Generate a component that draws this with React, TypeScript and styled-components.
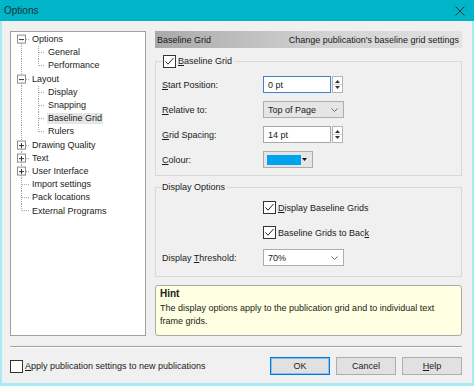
import styled, { createGlobalStyle } from 'styled-components'

const GlobalStyle = createGlobalStyle`
  html, body {
    margin: 0;
    padding: 0;
  }
  body {
    font-family: 'Liberation Sans', Arial, sans-serif;
    font-size: 9px;
    color: #1a1a1a;
    background: #f0f0f0;
  }
  * {
    box-sizing: border-box;
  }
`

const Window = styled.div`
  width: 474px;
  height: 386px;
  display: flex;
  flex-direction: column;
  overflow: hidden;
`

const TitleBar = styled.header`
  height: 21px;
  flex-shrink: 0;
  display: flex;
  align-items: center;
  justify-content: space-between;
  padding: 0 9px 0 4px;
  background: #00b5c8;
  color: #15333a;
  font-size: 10px;
`

const Body = styled.div`
  flex: 1;
  display: flex;
  flex-direction: column;
  padding: 10px 10px 0 8px;
  background: #f0f0f0;
  border: solid #a9eaf3;
  border-width: 0 2px 3px 2px;
`

const MainRow = styled.div`
  height: 305px;
  display: flex;
  gap: 9px;
`

const Tree = styled.ul`
  width: 136px;
  margin: 0;
  padding: 1px 0 0;
  list-style: none;
  background: #fff;
  border: 1px solid #a0a0a0;
`

const TreeRow = styled.li`
  height: 13.2px;
  display: flex;
  align-items: center;
`

const Guides = styled.svg`
  flex-shrink: 0;
  height: 100%;
`

const TreeLabel = styled.span<{ $selected?: boolean }>`
  padding: 0 1px;
  line-height: 11px;
  white-space: nowrap;
  background: ${(p) => (p.$selected ? '#e6e6e6' : 'transparent')};
`

const RightColumn = styled.section`
  width: 307px;
  display: flex;
  flex-direction: column;
`

const Header = styled.div`
  height: 17px;
  flex-shrink: 0;
  display: flex;
  align-items: center;
  justify-content: space-between;
  padding: 0 3px 0 2px;
  background: linear-gradient(to right, #a9a9a9, #d2d2d2 55%, #e2e2e2);
`

const GroupBox = styled.fieldset<{ $top: number; $bottom: number; $pad: number }>`
  margin: ${(p) => p.$top}px 0 0;
  padding: ${(p) => p.$pad}px 6px ${(p) => p.$bottom}px;
  min-width: 0;
  border: 1px solid #d9d9d9;
`

const Legend = styled.legend<{ $indent?: number }>`
  display: flex;
  align-items: center;
  gap: 2px;
  height: 13px;
  padding: 0 2px 0 ${(p) => p.$indent ?? 0}px;
  line-height: 13px;
`

const FormGrid = styled.div`
  display: grid;
  grid-template-columns: 101px 1fr;
  grid-auto-rows: 17px;
  row-gap: 8px;
  align-items: center;
`

const FieldLabel = styled.span``

const SpinField = styled.div`
  display: flex;
  gap: 1px;
  height: 17px;
`

const TextBox = styled.div<{ $focused?: boolean }>`
  width: 68px;
  height: 17px;
  display: flex;
  align-items: center;
  padding-left: 4px;
  background: #fff;
  border: 1px solid ${(p) => (p.$focused ? '#3f80cf' : '#a8a8a8')};
`

const Spinner = styled.div`
  width: 11px;
  height: 17px;
  display: flex;
  flex-direction: column;
  background: #fff;
  border: 1px solid #b4b4b4;
`

const SpinHalf = styled.div<{ $down?: boolean }>`
  flex: 1;
  display: flex;
  align-items: ${(p) => (p.$down ? 'flex-start' : 'flex-end')};
  justify-content: center;
  padding: ${(p) => (p.$down ? '1px 0 0' : '0 0 1px')};
  border-top: ${(p) => (p.$down ? '1px solid #d6d6d6' : '0')};
`

const Select = styled.div<{ $white?: boolean }>`
  width: 81px;
  height: 17px;
  display: flex;
  align-items: center;
  justify-content: space-between;
  padding: 0 5px 0 4px;
  background: ${(p) => (p.$white ? '#fff' : '#e5e5e5')};
  border: 1px solid #adadad;
`

const ColourButton = styled.div`
  width: 50px;
  height: 17px;
  display: flex;
  align-items: center;
  justify-content: space-between;
  padding: 0 5px 0 3px;
  background: #e5e5e5;
  border: 1px solid #adadad;
`

const Swatch = styled.span<{ $color: string }>`
  width: 34px;
  height: 10px;
  background: ${(p) => p.$color};
`

const CheckRow = styled.label<{ $col?: number }>`
  grid-column: ${(p) => p.$col ?? 'auto'};
  display: flex;
  align-items: center;
  gap: 2px;
  white-space: nowrap;
`

const Box = styled.span`
  width: 13px;
  height: 13px;
  flex-shrink: 0;
  display: inline-flex;
  background: #fff;
  border: 1px solid #333;
`

const Hint = styled.div`
  margin-top: 8px;
  height: 51px;
  padding: 1px 4px 0;
  background: #ffffe1;
  border: 1px solid #aaa;
  border-radius: 3px;
`

const HintTitle = styled.div`
  font-size: 10px;
  font-weight: bold;
  line-height: 13px;
`

const HintText = styled.p`
  margin: 2px 0 0;
  line-height: 13px;
`

const Separator = styled.hr`
  margin: 10px 0 0;
  height: 2px;
  border: 0;
  border-top: 1px solid #a0a0a0;
  border-bottom: 1px solid #fff;
`

const Footer = styled.div`
  margin-top: 9px;
  height: 18px;
  display: flex;
  align-items: center;
  justify-content: space-between;
`

const Buttons = styled.div`
  display: flex;
  gap: 6px;
`

const Button = styled.button<{ $primary?: boolean }>`
  width: 60px;
  height: 18px;
  padding: 0;
  font: inherit;
  color: #1a1a1a;
  background: #e1e1e1;
  border: 1px solid ${(p) => (p.$primary ? '#0078d7' : '#adadad')};
  box-shadow: ${(p) => (p.$primary ? 'inset 0 0 0 1px #8fc0ea' : 'none')};
`

type Node = {
  label: string
  level: 0 | 1
  expander?: 'minus' | 'plus'
  first?: boolean
  last?: boolean
  selected?: boolean
}

const nodes: Node[] = [
  { label: 'Options', level: 0, expander: 'minus', first: true },
  { label: 'General', level: 1 },
  { label: 'Performance', level: 1, last: true },
  { label: 'Layout', level: 0, expander: 'minus' },
  { label: 'Display', level: 1 },
  { label: 'Snapping', level: 1 },
  { label: 'Baseline Grid', level: 1, selected: true },
  { label: 'Rulers', level: 1, last: true },
  { label: 'Drawing Quality', level: 0, expander: 'plus' },
  { label: 'Text', level: 0, expander: 'plus' },
  { label: 'User Interface', level: 0, expander: 'plus' },
  { label: 'Import settings', level: 0 },
  { label: 'Pack locations', level: 0 },
  { label: 'External Programs', level: 0, last: true },
]

const dot = { stroke: '#a3a3a3', strokeWidth: 1, strokeDasharray: '1 1' }

function TreeGuides({ node }: { node: Node }) {
  if (node.level === 1) {
    return (
      <Guides width={36}>
        <line x1={10.5} x2={10.5} y1="0" y2="100%" {...dot} />
        <line x1={27.5} x2={27.5} y1="0" y2={node.last ? '50%' : '100%'} {...dot} />
        <line x1={28} x2={34} y1="50%" y2="50%" {...dot} />
      </Guides>
    )
  }
  return (
    <Guides width={20}>
      <line
        x1={10.5}
        x2={10.5}
        y1={node.first ? '50%' : '0'}
        y2={node.last ? '50%' : '100%'}
        {...dot}
      />
      <line x1={11} x2={19} y1="50%" y2="50%" {...dot} />
      {node.expander && (
        <g transform="translate(0 -4.5)">
          <rect x={6.5} y="50%" width={8} height={8} fill="#fff" stroke="#8c8c8c" />
        </g>
      )}
      {node.expander && <line x1={8} x2={13} y1="50%" y2="50%" stroke="#333" />}
      {node.expander === 'plus' && (
        <g transform="translate(0 -2.5)">
          <rect x={10} y="50%" width={1} height={5} fill="#333" />
        </g>
      )}
    </Guides>
  )
}

function Check({ checked }: { checked?: boolean }) {
  return (
    <Box>
      {checked && (
        <svg width={11} height={11} viewBox="0 0 11 11">
          <polyline points="1.5,5.5 4,8.2 9.5,2" fill="none" stroke="#222" strokeWidth={1} />
        </svg>
      )}
    </Box>
  )
}

function Chevron() {
  return (
    <svg width={7} height={4} viewBox="0 0 7 4">
      <polyline points="0.5,0.5 3.5,3.5 6.5,0.5" fill="none" stroke="#6b6b6b" />
    </svg>
  )
}

function Spin() {
  return (
    <Spinner>
      <SpinHalf>
        <svg width={5} height={3} viewBox="0 0 5 3">
          <polygon points="0,3 2.5,0 5,3" fill="#333" />
        </svg>
      </SpinHalf>
      <SpinHalf $down>
        <svg width={5} height={3} viewBox="0 0 5 3">
          <polygon points="0,0 5,0 2.5,3" fill="#333" />
        </svg>
      </SpinHalf>
    </Spinner>
  )
}

export default function App() {
  return (
    <>
      <GlobalStyle />
      <Window>
        <TitleBar>
          <span>Options</span>
          <svg width={10} height={10} viewBox="0 0 10 10">
            <path d="M0.5 0.5 L9.5 9.5 M9.5 0.5 L0.5 9.5" stroke="#1d3a40" strokeWidth={1} />
          </svg>
        </TitleBar>
        <Body>
          <MainRow>
            <Tree>
              {nodes.map((n) => (
                <TreeRow key={n.label}>
                  <TreeGuides node={n} />
                  <TreeLabel $selected={n.selected}>{n.label}</TreeLabel>
                </TreeRow>
              ))}
            </Tree>
            <RightColumn>
              <Header>
                <span>Baseline Grid</span>
                <span>Change publication's baseline grid settings</span>
              </Header>
              <GroupBox $top={7} $pad={8} $bottom={7}>
                <Legend $indent={1}>
                  <Check checked />
                  <span>
                    <u>B</u>aseline Grid
                  </span>
                </Legend>
                <FormGrid>
                  <FieldLabel>
                    <u>S</u>tart Position:
                  </FieldLabel>
                  <SpinField>
                    <TextBox $focused>0 pt</TextBox>
                    <Spin />
                  </SpinField>
                  <FieldLabel>
                    <u>R</u>elative to:
                  </FieldLabel>
                  <Select>
                    <span>Top of Page</span>
                    <Chevron />
                  </Select>
                  <FieldLabel>
                    <u>G</u>rid Spacing:
                  </FieldLabel>
                  <SpinField>
                    <TextBox>14 pt</TextBox>
                    <Spin />
                  </SpinField>
                  <FieldLabel>
                    <u>C</u>olour:
                  </FieldLabel>
                  <ColourButton>
                    <Swatch $color="#00a3ec" />
                    <svg width={5} height={3} viewBox="0 0 5 3">
                      <polygon points="0,0 5,0 2.5,3" fill="#111" />
                    </svg>
                  </ColourButton>
                </FormGrid>
              </GroupBox>
              <GroupBox $top={5} $pad={5} $bottom={10}>
                <Legend>Display Options</Legend>
                <FormGrid>
                  <CheckRow $col={2}>
                    <Check checked />
                    <span>
                      <u>D</u>isplay Baseline Grids
                    </span>
                  </CheckRow>
                  <CheckRow $col={2}>
                    <Check checked />
                    <span>
                      Baseline Grids to Bac<u>k</u>
                    </span>
                  </CheckRow>
                  <FieldLabel>
                    Display <u>T</u>hreshold:
                  </FieldLabel>
                  <Select $white>
                    <span>70%</span>
                    <Chevron />
                  </Select>
                </FormGrid>
              </GroupBox>
              <Hint>
                <HintTitle>Hint</HintTitle>
                <HintText>
                  The display options apply to the publication grid and to individual text
                  <br />
                  frame grids.
                </HintText>
              </Hint>
            </RightColumn>
          </MainRow>
          <Separator />
          <Footer>
            <CheckRow>
              <Check />
              <span>
                <u>A</u>pply publication settings to new publications
              </span>
            </CheckRow>
            <Buttons>
              <Button $primary>OK</Button>
              <Button>Cancel</Button>
              <Button>
                <u>H</u>elp
              </Button>
            </Buttons>
          </Footer>
        </Body>
      </Window>
    </>
  )
}
